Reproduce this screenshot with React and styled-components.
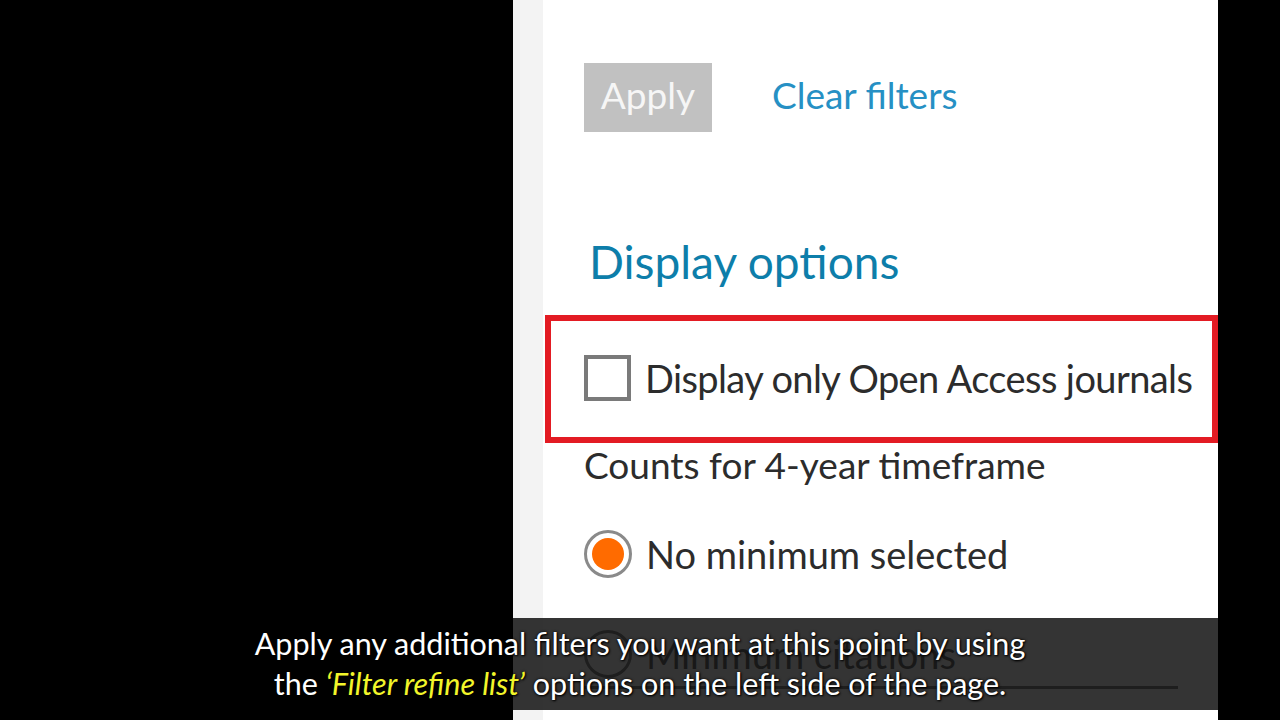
import React from 'react';
import styled, { createGlobalStyle } from 'styled-components';

const GlobalStyle = createGlobalStyle`
    html, body {
        margin: 0;
        padding: 0;
        background: #000;
    }
`;

const App = () => {
    return (
        <>
            <GlobalStyle />
            <Screen>
                <Panel>
                    <Strip />
                    <Content>
                        <Actions>
                            <ApplyButton>Apply</ApplyButton>
                            <LinkButton>Clear filters</LinkButton>
                        </Actions>

                        <Heading>Display options</Heading>

                        <Highlight>
                            <Option $tight>
                                <Checkbox />
                                Display only Open Access journals
                            </Option>
                        </Highlight>

                        <Label>Counts for 4-year timeframe</Label>

                        <Option>
                            <Radio checked />
                            No minimum selected
                        </Option>
                        <Option $gap={36}>
                            <Radio />
                            Minimum citations
                        </Option>
                        <Rule />
                    </Content>
                    <CaptionBar />
                </Panel>

                <Caption>
                    <p>Apply any additional filters you want at this point by using</p>
                    <p>
                        the <em>‘Filter refine list’</em> options on the left side of the page.
                    </p>
                </Caption>
            </Screen>
        </>
    );
};

const Screen = styled.div`
    position: relative;
    width: 1280px;
    height: 720px;
    background: #000;
    overflow: hidden;
    display: flex;
    padding-left: 513px;
    box-sizing: border-box;
`;

const Panel = styled.div`
    position: relative;
    width: 705px;
    height: 720px;
    background: #fff;
    display: flex;
`;

const Strip = styled.div`
    width: 30px;
    flex-shrink: 0;
    background: #f3f3f3;
`;

const Content = styled.div`
    flex: 1;
    padding: 63px 0 0 41px;
    font-family: Lato, 'Open Sans', sans-serif;
    color: #2c2c2c;
`;

const Actions = styled.div`
    display: flex;
    align-items: center;
    gap: 60px;
`;

const ApplyButton = styled.button`
    width: 128px;
    height: 69px;
    border: none;
    background: #c1c1c1;
    color: #f6f6f6;
    font-family: inherit;
    font-size: 37px;
    padding: 0 0 6px;
`;

const LinkButton = styled.button`
    border: none;
    background: none;
    padding: 0 0 6px;
    color: #2690c4;
    font-family: inherit;
    font-size: 37px;
`;

const Heading = styled.h2`
    margin: 100px 0 0 5px;
    font-size: 46px;
    font-weight: 400;
    line-height: 60px;
    color: #0d7eaa;
`;

const Highlight = styled.div`
    margin: 23px 0 0 -39px;
    padding: 2px 0 0 33px;
    height: 114px;
    border: 6px solid #e31b23;
    display: flex;
    align-items: center;
`;

const Option = styled.div`
    display: flex;
    align-items: center;
    gap: 14px;
    height: 60px;
    font-size: 38px;
    white-space: nowrap;
    letter-spacing: ${(p) => (p.$tight ? '-0.6px' : 'normal')};
    margin-top: ${(p) => (p.$gap ? `${p.$gap}px` : '0')};
    padding-bottom: 4px;
`;

const Checkbox = styled.span`
    width: 47px;
    height: 46px;
    box-sizing: border-box;
    border: 4px solid #7a7a7a;
    flex-shrink: 0;
`;

const Radio = styled.span`
    width: 48px;
    height: 48px;
    box-sizing: border-box;
    border-radius: 50%;
    border: 3px solid ${(p) => (p.checked ? '#8a8a8a' : '#555')};
    flex-shrink: 0;
    display: flex;
    align-items: center;
    justify-content: center;

    &::after {
        content: '';
        width: 32px;
        height: 32px;
        border-radius: 50%;
        background: ${(p) => (p.checked ? '#ff6b00' : 'transparent')};
    }
`;

const Label = styled.div`
    margin: -3px 0 34px;
    font-size: 37px;
    line-height: 50px;
`;

const Rule = styled.div`
    margin-top: -2px;
    height: 3px;
    width: 594px;
    background: #555;
`;

const CaptionBar = styled.div`
    position: absolute;
    left: 0;
    right: 0;
    top: 618px;
    height: 92px;
    background: rgba(22, 22, 22, 0.87);
`;

const Caption = styled.div`
    position: absolute;
    left: 0;
    right: 0;
    top: 623px;
    text-align: center;
    font-family: Lato, 'Open Sans', sans-serif;
    font-size: 30.5px;
    line-height: 40px;
    color: #fff;
    text-shadow: 0 0 3px #000, 1px 1px 2px #000;

    p {
        margin: 0;
    }

    em {
        color: #f2f52a;
    }
`;

export default App;
